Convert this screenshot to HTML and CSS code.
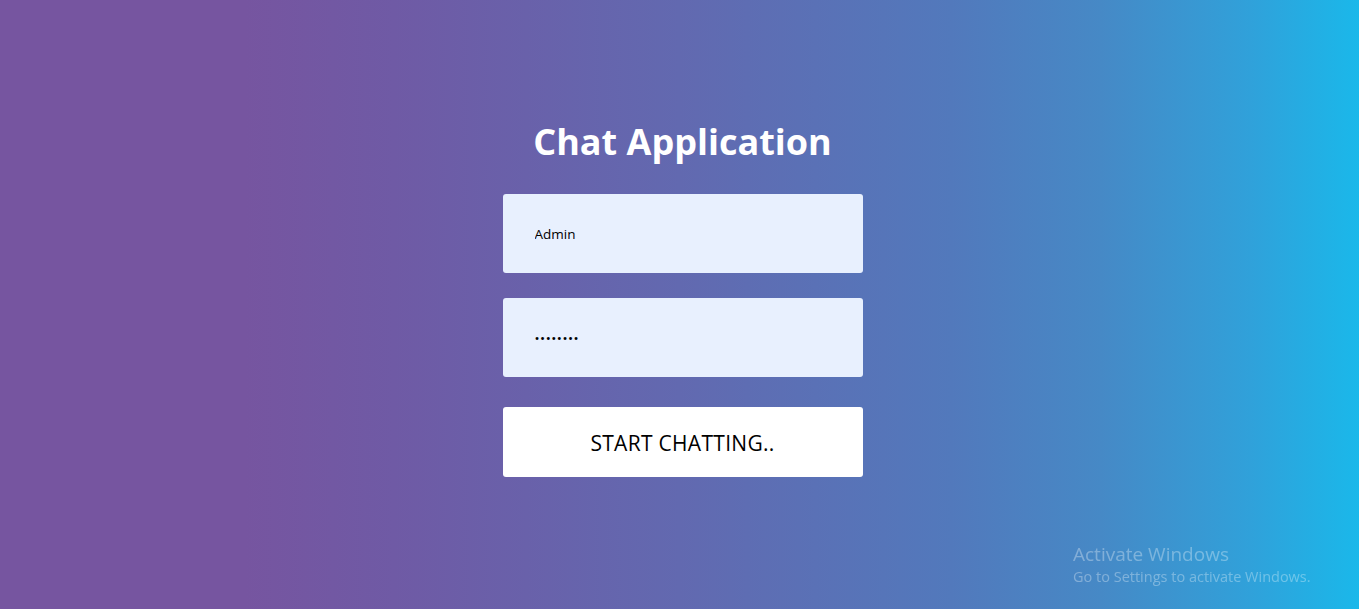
FILE: index.html
```html
<!DOCTYPE html>
<html lang="en">
<head>
<meta charset="utf-8">
<title>Chat Application</title>
<link rel="stylesheet" href="styles.css">
</head>
<body>
<main class="login">
  <h1 class="title">Chat Application</h1>
  <form class="form">
    <input class="field" type="text" value="Admin">
    <input class="field field-pass" type="password" value="12345678">
    <button class="start" type="button">START CHATTING..</button>
  </form>
</main>
<div class="watermark">
  <div class="wm-title">Activate Windows</div>
  <div class="wm-sub">Go to Settings to activate Windows.</div>
</div>
</body>
</html>
```

FILE: styles.css
```css
html, body {
  margin: 0;
  height: 100%;
}
body {
  font-family: "Open Sans", "Noto Sans", sans-serif;
  background: linear-gradient(to right,
    #7655a0 0%,
    #7655a0 18%,
    #6f5aa5 29%,
    #6269b0 50%,
    #5279bc 70%,
    #4689c6 81%,
    #30a1da 92%,
    #1ab8ea 100%);
  overflow: hidden;
}
.login {
  width: 360px;
  margin: 0 0 0 calc(50% - 177px);
  padding-top: 120px;
  display: flex;
  flex-direction: column;
}
.title {
  margin: 0 0 31px;
  font-size: 36px;
  line-height: 43px;
  font-weight: 700;
  color: #fff;
  text-align: center;
  letter-spacing: 0;
}
.form {
  display: flex;
  flex-direction: column;
}
.field {
  box-sizing: border-box;
  height: 79px;
  margin: 0 0 25px;
  padding: 0 32px;
  border: none;
  border-radius: 3px;
  background: #e8f0fe;
  font-family: "Open Sans", "Noto Sans", sans-serif;
  font-size: 13.5px;
  color: #000;
  outline: none;
}
.field-pass {
  margin-bottom: 30px;
  letter-spacing: 0.5px;
}
.start {
  height: 70px;
  border: none;
  border-radius: 3px;
  background: #fff;
  font-family: "Open Sans", "Noto Sans", sans-serif;
  font-size: 21px;
  padding: 2px 0 0;
  color: #000;
  letter-spacing: 0.3px;
  cursor: pointer;
}
.watermark {
  position: fixed;
  left: 1073px;
  top: 542px;
  color: rgba(255, 255, 255, 0.32);
  font-family: "Open Sans", "Noto Sans", sans-serif;
}
.wm-title {
  font-size: 19px;
  line-height: 24px;
  letter-spacing: 0;
}
.wm-sub {
  font-size: 14.5px;
  line-height: 21px;
  letter-spacing: 0;
}
```
